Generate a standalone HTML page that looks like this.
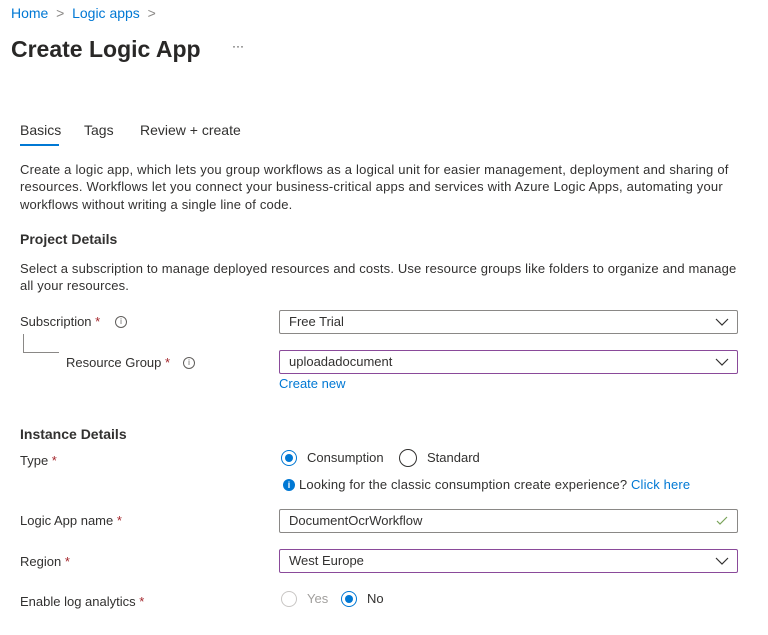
<!DOCTYPE html>
<html><head><meta charset="utf-8"><style>
body{margin:0;width:768px;height:635px;background:#fff;font-family:"Liberation Sans",sans-serif;color:#323130;position:relative;overflow:hidden}
.a{position:absolute;white-space:nowrap;font-size:13px;line-height:16px}
.blue{color:#0078d4}
.req{color:#a4262c}
.box{position:absolute;left:279px;width:457px;height:22px;border:1px solid #8a8886;border-radius:2px}
.box.p{border-color:#8a4a9a}
.box span{position:absolute;left:9px;top:3px;font-size:13px}
.chev{position:absolute;right:8px;top:5px}
.info{position:absolute;width:10px;height:10px;border:1px solid #605e5c;border-radius:50%;font-size:8px;line-height:10px;text-align:center;color:#605e5c}
.rad{position:absolute;width:16px;height:16px;border:1px solid #323130;border-radius:50%;box-sizing:border-box}
.rad.on{border-color:#0078d4}
.rad.on:after{content:"";position:absolute;left:3px;top:3px;width:8px;height:8px;border-radius:50%;background:#0078d4}
</style></head><body>
<div class="a blue" style="left:11px;top:5px;font-size:14px">Home <span style="color:#8a8886">&nbsp;&gt;&nbsp;</span> Logic apps <span style="color:#8a8886">&nbsp;&gt;</span></div>
<div class="a" style="left:11px;top:34px;font-size:23px;line-height:30px;font-weight:bold;color:#292827">Create Logic App</div>
<div class="a" style="left:232px;top:38px;font-size:12px">···</div>
<div class="a" style="left:20px;top:122px;font-size:14px">Basics</div>
<div style="position:absolute;left:20px;top:144px;width:39px;height:2px;background:#0078d4"></div>
<div class="a" style="left:84px;top:122px;font-size:14px">Tags</div>
<div class="a" style="left:140px;top:122px;font-size:14px">Review + create</div>
<div class="a" style="left:20px;top:162px;letter-spacing:0.22px">Create a logic app, which lets you group workflows as a logical unit for easier management, deployment and sharing of</div>
<div class="a" style="left:20px;top:179px;letter-spacing:0.2px">resources. Workflows let you connect your business-critical apps and services with Azure Logic Apps, automating your</div>
<div class="a" style="left:20px;top:197px;letter-spacing:0.15px">workflows without writing a single line of code.</div>
<div class="a" style="left:20px;top:231px;font-size:14px;font-weight:bold">Project Details</div>
<div class="a" style="left:20px;top:261px;letter-spacing:0.15px">Select a subscription to manage deployed resources and costs. Use resource groups like folders to organize and manage</div>
<div class="a" style="left:20px;top:278px;letter-spacing:0.15px">all your resources.</div>
<div class="a" style="left:20px;top:314px">Subscription <span class="req">*</span></div>
<div class="info" style="left:115px;top:316px">i</div>
<div class="box" style="top:310px"><span>Free Trial</span><svg class="chev" width="14" height="12" viewBox="0 0 14 12"><path d="M1 3l6 6 6-6" fill="none" stroke="#323130" stroke-width="1.2"/></svg></div>
<div style="position:absolute;left:23px;top:334px;width:35px;height:18px;border-left:1px solid #8a8886;border-bottom:1px solid #8a8886"></div>
<div class="a" style="left:66px;top:355px">Resource Group <span class="req">*</span></div>
<div class="info" style="left:183px;top:357px">i</div>
<div class="box p" style="top:350px"><span>uploadadocument</span><svg class="chev" width="14" height="12" viewBox="0 0 14 12"><path d="M1 3l6 6 6-6" fill="none" stroke="#323130" stroke-width="1.2"/></svg></div>
<div class="a blue" style="left:279px;top:376px">Create new</div>
<div class="a" style="left:20px;top:426px;font-size:14px;font-weight:bold">Instance Details</div>
<div class="a" style="left:20px;top:453px">Type <span class="req">*</span></div>
<div class="rad on" style="left:281px;top:450px"></div>
<div class="a" style="left:307px;top:450px">Consumption</div>
<div class="rad" style="left:399px;top:449px;width:18px;height:18px"></div>
<div class="a" style="left:427px;top:450px">Standard</div>
<div style="position:absolute;left:283px;top:479px;width:12px;height:12px;border-radius:50%;background:#0078d4;color:#fff;font-size:9px;line-height:12px;text-align:center;font-weight:bold">i</div>
<div class="a" style="left:299px;top:477px;letter-spacing:0.15px">Looking for the classic consumption create experience? <span class="blue">Click here</span></div>
<div class="a" style="left:20px;top:513px">Logic App name <span class="req">*</span></div>
<div class="box" style="top:509px"><span>DocumentOcrWorkflow</span><svg class="chev" width="14" height="12" viewBox="0 0 14 12"><path d="M2 6l3 3 7-7" fill="none" stroke="#7aa35a" stroke-width="1.2"/></svg></div>
<div class="a" style="left:20px;top:554px">Region <span class="req">*</span></div>
<div class="box p" style="top:549px"><span>West Europe</span><svg class="chev" width="14" height="12" viewBox="0 0 14 12"><path d="M1 3l6 6 6-6" fill="none" stroke="#323130" stroke-width="1.2"/></svg></div>
<div class="a" style="left:20px;top:594px">Enable log analytics <span class="req">*</span></div>
<div class="rad" style="left:281px;top:591px;border-color:#c8c6c4"></div>
<div class="a" style="left:307px;top:591px;color:#a19f9d">Yes</div>
<div class="rad on" style="left:341px;top:591px"></div>
<div class="a" style="left:367px;top:591px">No</div>
</body></html>
